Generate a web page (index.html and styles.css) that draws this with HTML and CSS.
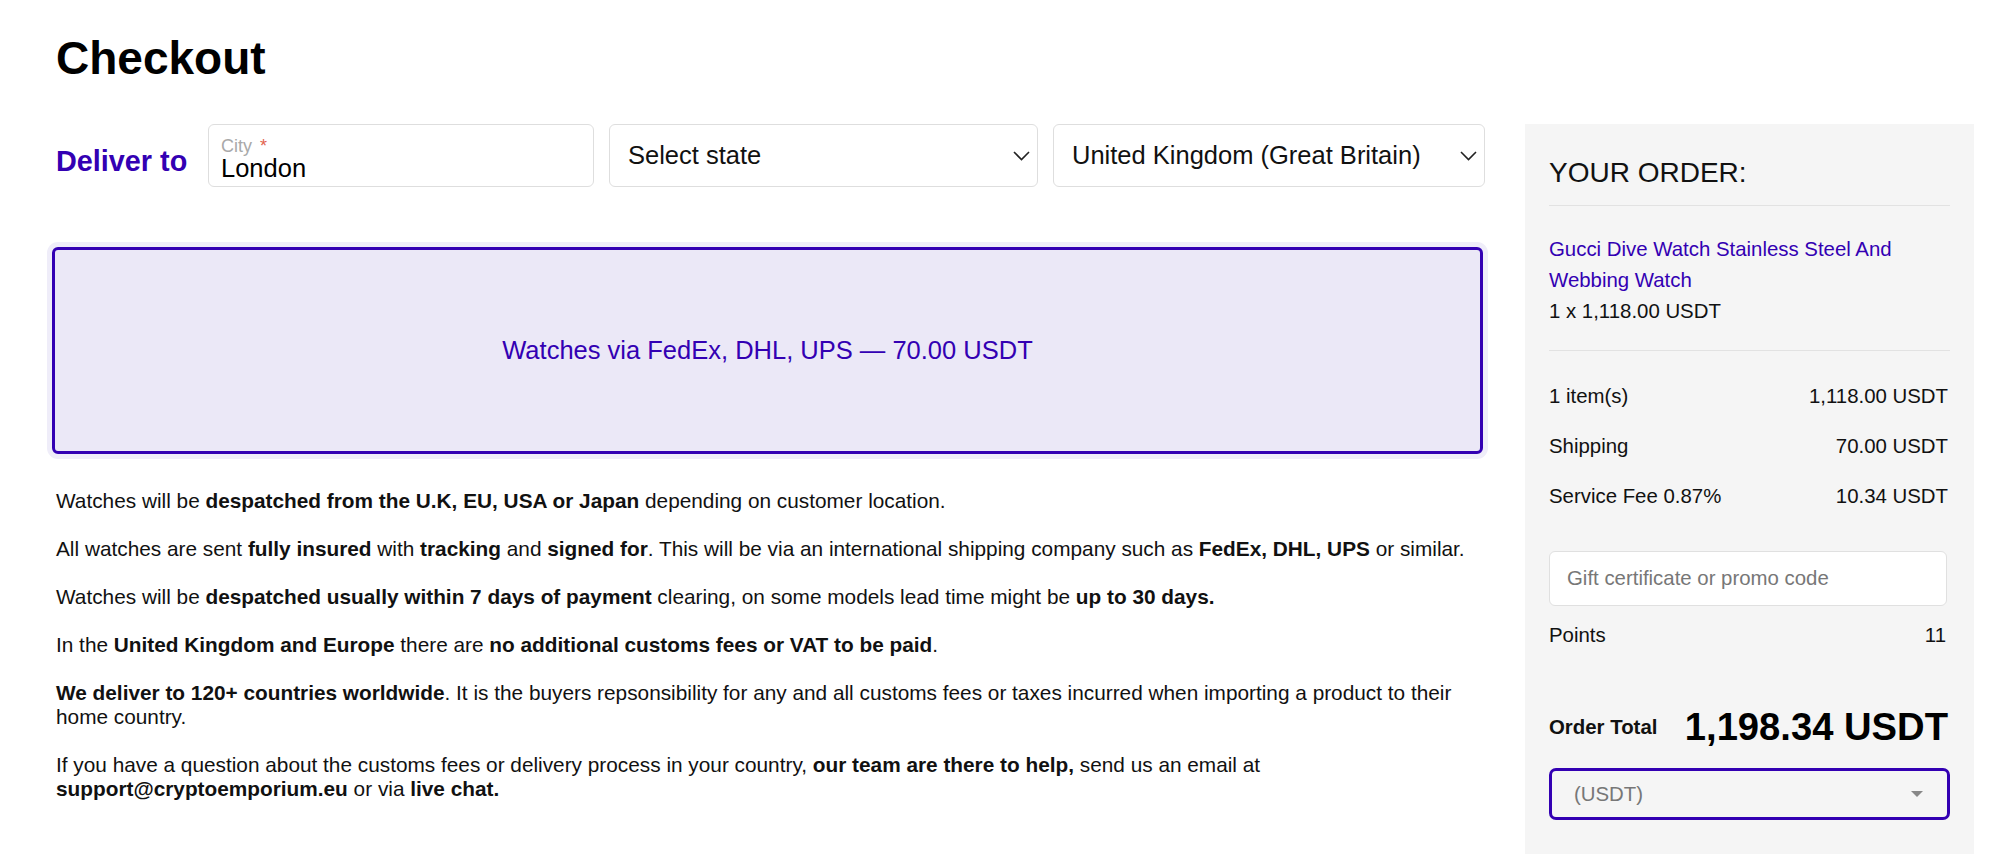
FILE: index.html
```html
<!DOCTYPE html>
<html>
<head>
  <title>Checkout</title>
  <link rel="stylesheet" href="styles.css">
</head>
<body>
  <div class="page">
    <div class="main">
      <h1>Checkout</h1>

      <div class="deliver-row">
        <span class="deliver-label">Deliver to</span>
        <div class="field city">
          <label for="city">City <span class="req">*</span></label>
          <div class="value" id="city">London</div>
        </div>
        <div class="field select state">
          <span>Select state</span>
          <svg width="17" height="10" viewBox="0 0 17 10"><polyline points="1,1 8.5,8.5 16,1" fill="none" stroke="#222" stroke-width="1.6"/></svg>
        </div>
        <div class="field select country">
          <span>United Kingdom (Great Britain)</span>
          <svg width="17" height="10" viewBox="0 0 17 10"><polyline points="1,1 8.5,8.5 16,1" fill="none" stroke="#222" stroke-width="1.6"/></svg>
        </div>
      </div>

      <div class="shipping">Watches via FedEx, DHL, UPS — 70.00 USDT</div>

      <div class="info">
        <p>Watches will be <b>despatched from the U.K, EU, USA or Japan</b> depending on customer location.</p>
        <p>All watches are sent <b>fully insured</b> with <b>tracking</b> and <b>signed for</b>. This will be via an international shipping company such as <b>FedEx, DHL, UPS</b> or similar.</p>
        <p>Watches will be <b>despatched usually within 7 days of payment</b> clearing, on some models lead time might be <b>up to 30 days.</b></p>
        <p>In the <b>United Kingdom and Europe</b> there are <b>no additional customs fees or VAT to be paid</b>.</p>
        <p><b>We deliver to 120+ countries worldwide</b>. It is the buyers repsonsibility for any and all customs fees or taxes incurred when importing a product to their home country.</p>
        <p>If you have a question about the customs fees or delivery process in your country, <b>our team are there to help,</b> send us an email at <b>support@cryptoemporium.eu</b> or via <b>live chat.</b></p>
      </div>
    </div>

    <div class="sidebar">
      <h2>YOUR ORDER:</h2>
      <div class="product">
        <a href="#" class="product-name">Gucci Dive Watch Stainless Steel And Webbing Watch</a>
        <div>1 x 1,118.00 USDT</div>
      </div>
      <div class="totals">
        <div class="row"><span>1 item(s)</span><span>1,118.00 USDT</span></div>
        <div class="row"><span>Shipping</span><span>70.00 USDT</span></div>
        <div class="row"><span>Service Fee 0.87%</span><span>10.34 USDT</span></div>
      </div>
      <input type="text" class="promo" placeholder="Gift certificate or promo code">
      <div class="row points"><span>Points</span><span>11</span></div>
      <div class="order-total">
        <span class="total-label">Order Total</span>
        <span class="total-value">1,198.34 USDT</span>
      </div>
      <div class="currency">
        <span>(USDT)</span>
        <span class="caret"></span>
      </div>
    </div>
  </div>
</body>
</html>
```

FILE: styles.css
```css
body {
  margin: 0;
  font-family: "Liberation Sans", Arial, sans-serif;
  color: #111;
  background-color: #fff;
}

.page {
  display: flex;
  gap: 38px;
  padding: 0 28px 0 56px;
}

.main {
  flex: 1;
  min-width: 0;
}

h1 {
  margin: 32px 0 0;
  font-size: 46px;
  line-height: 52px;
  font-weight: bold;
  color: #000;
}

.deliver-row {
  display: flex;
  align-items: center;
  margin-top: 40px;
  height: 63px;
}

.deliver-label {
  width: 152px;
  padding-top: 11px;
  font-size: 28.8px;
  font-weight: bold;
  color: #3300b3;
}

.field {
  box-sizing: border-box;
  height: 63px;
  border: 1px solid #dedede;
  border-radius: 6px;
  background-color: #fff;
}

.city {
  width: 386px;
  padding: 11px 12px 0;
}

.city label {
  display: block;
  font-size: 18px;
  line-height: 20px;
  color: #a9a9a9;
}

.req {
  color: #e2634f;
  margin-left: 3px;
}

.city .value {
  font-size: 25.5px;
  line-height: 24px;
  color: #000;
}

.select {
  display: flex;
  align-items: center;
  justify-content: space-between;
  margin-left: 15px;
  padding: 0 7px 0 18px;
  font-size: 25.5px;
  color: #111;
}

.state {
  width: 429px;
}

.country {
  width: 432px;
}

.shipping {
  display: flex;
  align-items: center;
  justify-content: center;
  height: 201px;
  margin: 60px 4px 0 -4px;
  border: 3px solid #3300b3;
  border-radius: 6px;
  background-color: #ebe8f7;
  box-shadow: 0 0 0 5px #efedf9;
  font-size: 25.5px;
  color: #3300b3;
}

.info {
  margin-top: 35px;
  font-size: 20.8px;
  line-height: 24px;
}

.info p {
  margin: 0 0 24px;
}

.sidebar {
  width: 449px;
  box-sizing: border-box;
  margin-top: 124px;
  padding: 32px 24px 40px;
  background-color: #f5f5f5;
  font-size: 20.4px;
  min-height: 730px;
}

h2 {
  margin: 0;
  padding-bottom: 15px;
  border-bottom: 1px solid #e2e2e2;
  font-size: 28px;
  line-height: 34px;
  font-weight: normal;
  color: #111;
}

.product {
  padding: 28px 0 23px;
  border-bottom: 1px solid #e2e2e2;
  line-height: 31px;
}

.product-name {
  display: block;
  color: #3300b3;
  text-decoration: none;
}

.totals {
  padding-top: 33px;
}

.row {
  display: flex;
  justify-content: space-between;
  line-height: 24px;
  margin-bottom: 26px;
  padding-right: 2px;
}

.promo {
  display: block;
  box-sizing: border-box;
  width: 398px;
  height: 55px;
  margin-top: 43px;
  padding: 0 17px;
  border: 1px solid #e0e0e0;
  border-radius: 6px;
  background-color: #fff;
  font-family: inherit;
  font-size: 20.4px;
  color: #111;
}

.promo::placeholder {
  color: #777;
}

.points {
  margin-top: 17px;
  margin-bottom: 0;
  padding-right: 4px;
}

.order-total {
  display: flex;
  align-items: center;
  justify-content: space-between;
  margin-top: 58px;
  padding-right: 2px;
}

.total-label {
  font-weight: bold;
}

.total-value {
  font-size: 38.2px;
  line-height: 44px;
  font-weight: bold;
  color: #000;
}

.currency {
  display: flex;
  align-items: center;
  justify-content: space-between;
  box-sizing: border-box;
  height: 52px;
  margin-top: 19px;
  padding: 0 24px 0 22px;
  border: 3px solid #3300b3;
  border-radius: 7px;
  background-color: #f5f5f5;
  color: #777;
}

.caret {
  width: 0;
  height: 0;
  border-left: 6px solid transparent;
  border-right: 6px solid transparent;
  border-top: 6px solid #888;
}
```
